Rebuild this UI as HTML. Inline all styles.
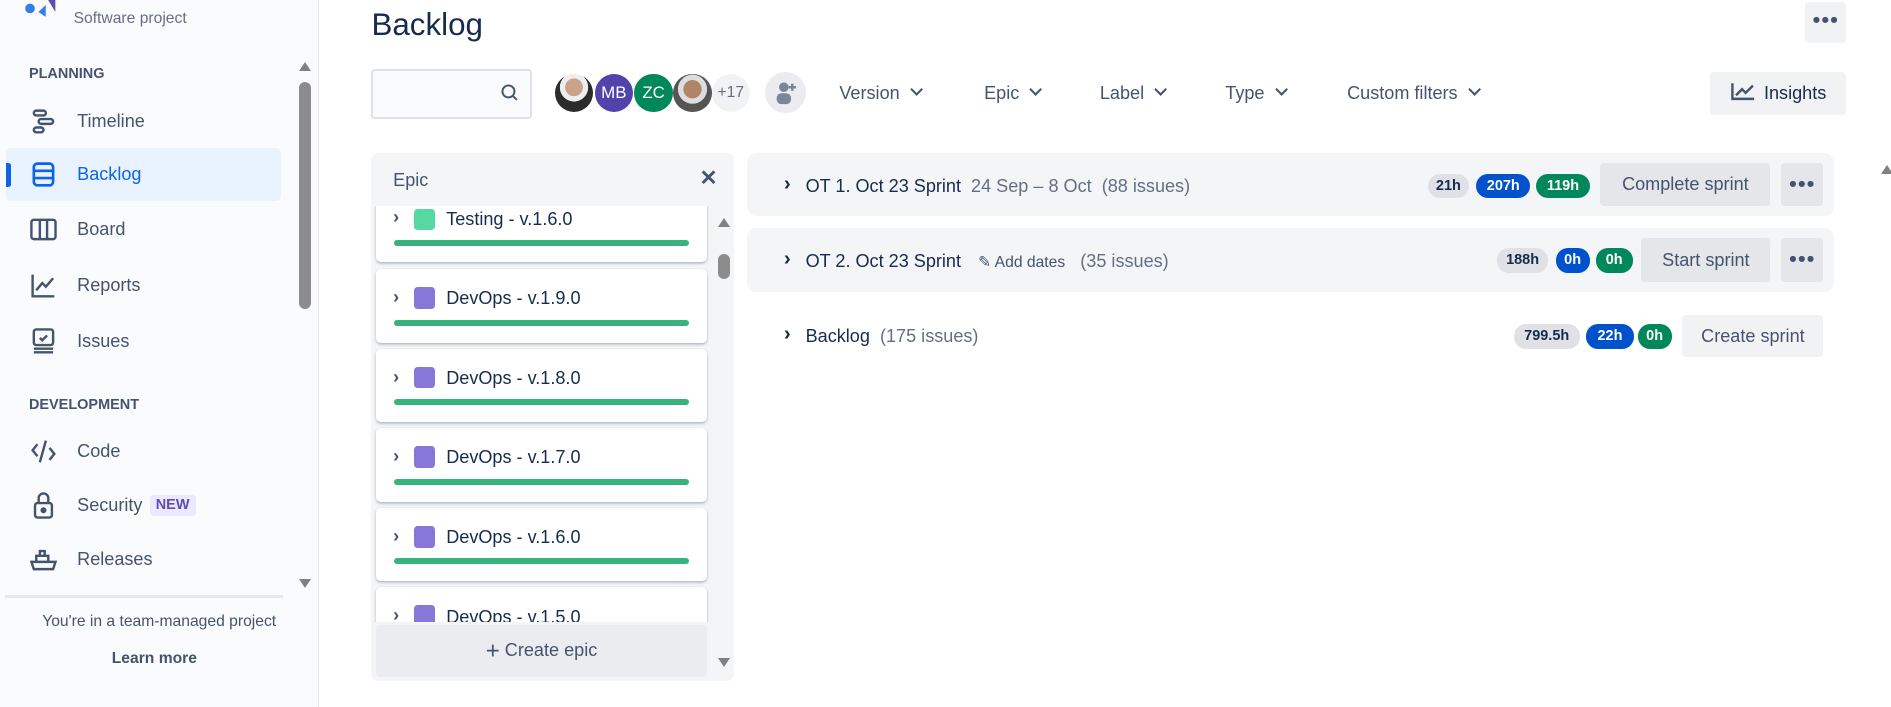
<!DOCTYPE html>
<html><head><meta charset="utf-8"><style>
html,body{margin:0;padding:0;overflow:hidden;background:#fff}
#root{zoom:1.206;width:1568px;height:586px;position:relative;font-family:"Liberation Sans",sans-serif;color:#172b4d;overflow:hidden}
.a{position:absolute}
.side{left:0;top:0;width:264px;height:586px;background:#fafbfc;border-right:1px solid #e6e8eb}
.sec{font-size:12px;font-weight:bold;color:#44546f;left:24px}
.item{left:24px;font-size:15px;color:#44546f;display:flex;align-items:center;height:24px}
.item svg{width:24px;height:24px;margin-right:16px}
.filt{font-size:15px;color:#44546f;top:69px}
.chev{display:inline-block;width:6px;height:6px;border-right:2px solid #44546f;border-bottom:2px solid #44546f;transform:rotate(45deg);margin-left:10px;position:relative;top:-4px}
.card{left:312px;width:274px;background:#fff;border-radius:4px;box-shadow:0 1px 2px rgba(9,30,66,.3)}
.card .t{position:absolute;left:58px;top:16px;font-size:15px}
.card .sq{position:absolute;left:31px;top:15px;width:18px;height:18px;border-radius:3px;background:#8777d9}
.card .ar{position:absolute;left:14px;top:15px;font-size:15px;color:#44546f;font-weight:bold}
.card .bar{position:absolute;left:15px;width:244px;top:39px;height:5px;border-radius:3px;background:#36b37e}
.sp{left:619px;width:902px;background:#f4f5f7;border-radius:8px}
.bd{position:absolute;height:20px;line-height:20px;border-radius:10px;font-size:12px;font-weight:bold;text-align:center}
.g{background:#dfe1e6;color:#172b4d}.b{background:#0052cc;color:#fff}.gr{background:#00875a;color:#fff}
.btn{position:absolute;background:#e4e6ea;border-radius:3px;font-size:15px;color:#44546f;text-align:center}
.dots{font-size:18px;font-weight:bold;color:#44546f;letter-spacing:1px}
.sb{background:#8c8c8c;border-radius:5px}
.tri{width:0;height:0;border-left:5px solid transparent;border-right:5px solid transparent}
.up{border-bottom:8px solid #808080}.dn{border-top:8px solid #808080}
.rc{position:absolute;left:650px;font-size:17px;font-weight:bold;color:#172b4d}
</style></head><body><div id="root">
<div class="a side"></div>
<svg class="a" style="left:20px;top:0" width="28" height="18" viewBox="0 0 28 18"><circle cx="5" cy="7" r="4" fill="#357de8"/><path d="M12 10 L18 4 L18 14 Z" fill="#357de8"/><path d="M20 0 L26 0 L26 10 Z" fill="#5e4db2"/></svg>
<div class="a" style="left:61px;top:8px;font-size:13px;color:#626f86">Software project</div>
<div class="a sec" style="top:55px">PLANNING</div>
<div class="a" style="left:5px;top:123px;width:228px;height:44px;background:#e9f2ff;border-radius:4px"></div>
<div class="a" style="left:5px;top:135px;width:4px;height:20px;background:#0c66e4;border-radius:0 2px 2px 0"></div>
<div class="a item" style="top:89px"><svg viewBox="0 0 24 24" fill="none" stroke="#44546f" stroke-width="2"><rect x="4" y="3" width="10" height="4" rx="2"/><rect x="8" y="10" width="12" height="4" rx="2"/><rect x="4" y="17" width="8" height="4" rx="2"/></svg>Timeline</div>
<div class="a item" style="top:133px;color:#0c66e4"><svg viewBox="0 0 24 24" fill="none" stroke="#0c66e4" stroke-width="2.2"><rect x="4" y="3" width="16" height="18" rx="3"/><path d="M4 9h16M4 15h16"/></svg>Backlog</div>
<div class="a item" style="top:178px"><svg viewBox="0 0 24 24" fill="none" stroke="#44546f" stroke-width="2"><rect x="2" y="4" width="20" height="16" rx="2"/><path d="M9 4v16M15 4v16"/></svg>Board</div>
<div class="a item" style="top:225px"><svg viewBox="0 0 24 24" fill="none" stroke="#44546f" stroke-width="2"><path d="M3 3v18h18M6 16l5-6 3 3 6-7"/></svg>Reports</div>
<div class="a item" style="top:271px"><svg viewBox="0 0 24 24" fill="none" stroke="#44546f" stroke-width="2"><rect x="4" y="2" width="16" height="13" rx="2"/><path d="M9 9l2 2 4-4M4 18h16M4 21h16"/></svg>Issues</div>
<div class="a sec" style="top:329px">DEVELOPMENT</div>
<div class="a item" style="top:362px"><svg viewBox="0 0 24 24" fill="none" stroke="#44546f" stroke-width="2"><path d="M7 6l-4 5 4 5M17 9l4 5-4 5M14 3l-5 18"/></svg>Code</div>
<div class="a item" style="top:407px"><svg viewBox="0 0 24 24" fill="none" stroke="#44546f" stroke-width="2"><rect x="5" y="10" width="14" height="12" rx="2"/><path d="M8 10V6a4 4 0 018 0v4"/><circle cx="12" cy="16" r="1.5" fill="#44546f"/></svg>Security<span style="margin-left:6px;background:#ece8ff;color:#5e4db2;font-size:12px;font-weight:bold;padding:2px 5px;border-radius:3px">NEW</span></div>
<div class="a item" style="top:452px"><svg viewBox="0 0 24 24" fill="none" stroke="#44546f" stroke-width="2"><path d="M2 14h20l-2 6H4z"/><path d="M6 14V9h10v5M9 9V5h4v4"/></svg>Releases</div>
<div class="a tri up" style="left:248px;top:51px"></div>
<div class="a sb" style="left:248px;top:68px;width:10px;height:188px"></div>
<div class="a tri dn" style="left:248px;top:480px"></div>
<div class="a" style="left:4px;top:493px;width:231px;height:3px;background:#e6e8eb"></div>
<div class="a" style="left:0;width:264px;top:508px;text-align:center;font-size:13px;color:#44546f">You're in a team-managed project</div>
<div class="a" style="left:0;width:256px;top:539px;text-align:center;font-size:13px;color:#44546f;font-weight:bold">Learn more</div>

<div class="a" style="left:308px;top:6px;font-size:26px;font-weight:500">Backlog</div>
<div class="a btn dots" style="left:1497px;top:2px;width:34px;height:34px;line-height:30px;background:#f1f2f4">•••</div>
<div class="a" style="left:308px;top:57px;width:130px;height:38px;border:2px solid #dfe1e6;border-radius:3px;background:#fafbfc"></div>
<svg class="a" style="left:415px;top:69px" width="16" height="16" viewBox="0 0 16 16" fill="none" stroke="#44546f" stroke-width="1.6"><circle cx="7" cy="7" r="5"/><path d="M11 11l3 3"/></svg>
<div class="a" style="left:460px;top:61px;width:32px;height:32px;border-radius:50%;background:radial-gradient(circle at 50% 35%,#c9a38a 0 28%,#eee 29% 45%,#2b2b2b 46%)"></div>
<div class="a" style="left:493px;top:61px;width:32px;height:32px;border-radius:50%;background:#5243aa;color:#fff;font-size:14px;line-height:32px;text-align:center">MB</div>
<div class="a" style="left:526px;top:61px;width:32px;height:32px;border-radius:50%;background:#00875a;color:#fff;font-size:14px;line-height:32px;text-align:center">ZC</div>
<div class="a" style="left:558px;top:61px;width:32px;height:32px;border-radius:50%;background:radial-gradient(circle at 50% 40%,#b08468 0 30%,#ddd 31% 48%,#555 49%)"></div>
<div class="a" style="left:590px;top:61px;width:32px;height:32px;border-radius:50%;background:#f1f2f4;color:#626f86;font-size:13px;line-height:32px;text-align:center">+17</div>
<div class="a" style="left:634px;top:60px;width:34px;height:34px;border-radius:50%;background:#ebecf0"></div>
<svg class="a" style="left:641px;top:66px" width="22" height="22" viewBox="0 0 22 22" fill="#7a869a"><circle cx="9" cy="6" r="4"/><rect x="3" y="11" width="12" height="9" rx="4"/><path d="M16 3v6M13 6h6" stroke="#7a869a" stroke-width="2"/></svg>
<div class="a filt" style="left:696px">Version<span class="chev"></span></div>
<div class="a filt" style="left:816px">Epic<span class="chev"></span></div>
<div class="a filt" style="left:912px">Label<span class="chev"></span></div>
<div class="a filt" style="left:1016px">Type<span class="chev"></span></div>
<div class="a filt" style="left:1117px">Custom filters<span class="chev"></span></div>
<div class="a btn" style="left:1418px;top:60px;width:113px;height:35px;line-height:35px;background:#f1f2f4;color:#172b4d"><svg width="22" height="16" viewBox="0 0 22 16" fill="none" stroke="#44546f" stroke-width="2" style="vertical-align:-2px;margin-right:6px"><path d="M2 1v13h18M5 11l5-5 3 3 6-6"/></svg>Insights</div>

<div class="a" style="left:308px;top:127px;width:301px;height:438px;background:#f4f5f7;border-radius:6px"></div>
<div class="a" style="left:326px;top:141px;font-size:15px;color:#44546f">Epic</div>
<div class="a" style="left:580px;top:137px;font-size:18px;font-weight:bold;color:#44546f">✕</div>
<div class="a" style="left:308px;top:171px;width:300px;height:345px;overflow:hidden">
 <div style="position:relative;left:-308px;top:-171px">
 <div class="a card" style="top:157px;height:60px"><span class="ar">›</span><div class="sq" style="background:#57d9a3;top:16px"></div><div class="t" style="top:16px">Testing - v.1.6.0</div><div class="bar" style="top:42px"></div></div>
 <div class="a card" style="top:223px;height:61px"><span class="ar">›</span><div class="sq"></div><div class="t">DevOps - v.1.9.0</div><div class="bar" style="top:42px"></div></div>
 <div class="a card" style="top:289px;height:61px"><span class="ar">›</span><div class="sq"></div><div class="t">DevOps - v.1.8.0</div><div class="bar" style="top:42px"></div></div>
 <div class="a card" style="top:355px;height:61px"><span class="ar">›</span><div class="sq"></div><div class="t">DevOps - v.1.7.0</div><div class="bar" style="top:42px"></div></div>
 <div class="a card" style="top:421px;height:61px"><span class="ar">›</span><div class="sq"></div><div class="t">DevOps - v.1.6.0</div><div class="bar" style="top:42px"></div></div>
 <div class="a card" style="top:487px;height:61px"><span class="ar">›</span><div class="sq"></div><div class="t">DevOps - v.1.5.0</div></div>
 </div>
</div>
<div class="a btn" style="left:312px;top:518px;width:274px;height:43px;line-height:43px;background:#ebecf0;color:#44546f"><span style="font-size:20px;vertical-align:-2px">+</span> Create epic</div>
<div class="a tri up" style="left:595px;top:181px"></div>
<div class="a sb" style="left:595px;top:211px;width:10px;height:20px"></div>
<div class="a tri dn" style="left:595px;top:546px"></div>

<div class="a sp" style="top:127px;height:52px"></div>
<div class="rc" style="top:143px">›</div>
<div class="a" style="left:668px;top:146px;font-size:15px"><b style="font-weight:500">OT 1. Oct 23 Sprint</b> <span style="color:#626f86">&nbsp;24 Sep – 8 Oct &nbsp;(88 issues)</span></div>
<div class="bd g" style="left:1184px;top:144px;width:34px">21h</div>
<div class="bd b" style="left:1224px;top:144px;width:45px">207h</div>
<div class="bd gr" style="left:1274px;top:144px;width:44px">119h</div>
<div class="btn" style="left:1327px;top:135px;width:141px;height:36px;line-height:36px">Complete sprint</div>
<div class="btn dots" style="left:1477px;top:135px;width:35px;height:36px;line-height:34px">•••</div>

<div class="a sp" style="top:189px;height:53px"></div>
<div class="rc" style="top:205px">›</div>
<div class="a" style="left:668px;top:208px;font-size:15px"><b style="font-weight:500">OT 2. Oct 23 Sprint</b> <span style="font-size:13px;color:#44546f;margin-left:10px">✎ Add dates</span><span style="color:#626f86"> &nbsp;&nbsp;(35 issues)</span></div>
<div class="bd g" style="left:1241px;top:206px;width:43px">188h</div>
<div class="bd b" style="left:1290px;top:206px;width:28px">0h</div>
<div class="bd gr" style="left:1323px;top:206px;width:31px">0h</div>
<div class="btn" style="left:1361px;top:197px;width:107px;height:37px;line-height:37px">Start sprint</div>
<div class="btn dots" style="left:1477px;top:197px;width:35px;height:37px;line-height:35px">•••</div>

<div class="rc" style="top:267px">›</div>
<div class="a" style="left:668px;top:270px;font-size:15px"><b style="font-weight:500">Backlog</b> <span style="color:#626f86">&nbsp;(175 issues)</span></div>
<div class="bd g" style="left:1255px;top:269px;width:55px">799.5h</div>
<div class="bd b" style="left:1315px;top:269px;width:40px">22h</div>
<div class="bd gr" style="left:1358px;top:269px;width:28px">0h</div>
<div class="btn" style="left:1395px;top:261px;width:117px;height:35px;line-height:35px;background:#f1f2f4">Create sprint</div>
<div class="a tri up" style="left:1560px;top:137px"></div>
</div></body></html>
